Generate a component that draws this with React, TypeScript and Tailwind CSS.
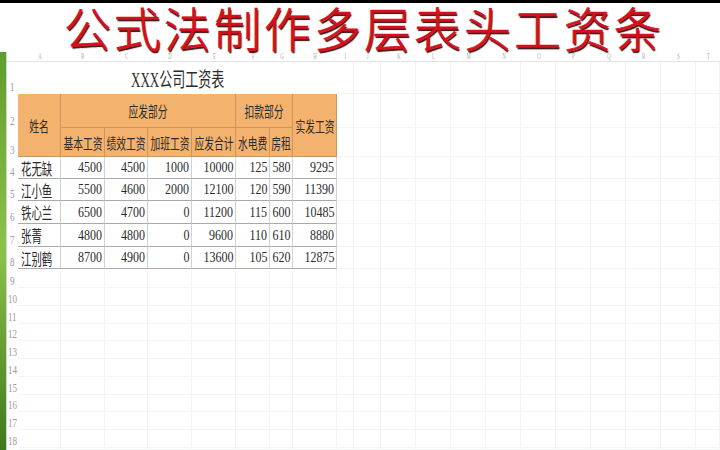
import React from 'react';

const letters = 'ABCDEFGHIJKLMNOPQRST'.split('');

const data: [string, number, number, number, number, number, number, number][] = [
  ['花无缺', 4500, 4500, 1000, 10000, 125, 580, 9295],
  ['江小鱼', 5500, 4600, 2000, 12100, 120, 590, 11390],
  ['铁心兰', 6500, 4700, 0, 11200, 115, 600, 10485],
  ['张菁', 4800, 4800, 0, 9600, 110, 610, 8880],
  ['江别鹤', 8700, 4900, 0, 13600, 105, 620, 12875],
];

function Cjk({ children, className = '' }: { children: React.ReactNode; className?: string }) {
  return <span className={`inline-block whitespace-nowrap scale-x-[0.65] ${className}`}>{children}</span>;
}

function Empty() {
  return <div className="border-r border-b border-[#f3f5f5]" />;
}

function RowNum({ n }: { n?: number }) {
  return (
    <div className="flex items-end justify-center pb-[1px] text-[13px] leading-none text-[#9c9c9c] font-['Liberation_Serif',serif]">
      {n !== undefined && <span className="inline-block scale-x-[0.7]">{n}</span>}
    </div>
  );
}

function HeadCell({ children, className = '' }: { children: React.ReactNode; className?: string }) {
  return (
    <div
      className={`bg-[#f3b26e] border-r border-b border-[#cf9360] flex items-center justify-center text-[15px] leading-none text-[#2b2b2b] font-['Noto_Sans_CJK_SC',sans-serif] ${className}`}
    >
      <Cjk>{children}</Cjk>
    </div>
  );
}

function Empties({ count }: { count: number }) {
  return (
    <>
      {Array.from({ length: count }).map((_, i) => (
        <Empty key={i} />
      ))}
    </>
  );
}

export default function App() {
  return (
    <div className="w-[720px] h-[450px] overflow-hidden bg-white flex flex-col">
      <div className="h-[52px] border-t-[3px] border-black flex items-start justify-center pt-[1px] pl-[8px]">
        <span className="text-[47px] leading-[46px] tracking-[3px] font-light text-[#d5101d] font-['Noto_Sans_CJK_SC',sans-serif] [-webkit-text-stroke:0.7px_#d5101d] [text-shadow:1px_2px_1px_#3a0b0b]">
          公式法制作多层表头工资条
        </span>
      </div>
      <div className="flex flex-1 min-h-0">
        <div className="w-[7px] bg-linear-to-b from-[#5f9e2c] via-[#8bc34a] to-[#3d7a1a] border-r border-[#cfd4cf]" />
        <div className="flex-1 grid grid-cols-[11px_43px_44px_43px_44px_44px_34px_23px_44px_17px_27px_35px_35px_35px_35px_35px_35px_35px_35px_35px_1fr] grid-rows-[10px_32px_34px_29px_22px_22px_23px_23px_22px_19px_17.75px_17.75px_17.75px_17.75px_17.75px_17.75px_17.75px_17.75px_17.75px_1fr]">
          {/* column header row */}
          <div className="border-b border-[#e2e4e4]" />
          {letters.map((l) => (
            <div
              key={l}
              className="border-b border-[#e2e4e4] flex items-center justify-center text-[8px] leading-none text-[#a8a8a8] font-['Liberation_Serif',serif]"
            >
              <span className="inline-block scale-x-[0.6]">{l}</span>
            </div>
          ))}

          {/* row 1 */}
          <RowNum n={1} />
          <div className="col-span-8 flex items-center justify-center pt-[4px] text-[20px] leading-none text-[#2b2b2b] font-['Liberation_Serif','Noto_Sans_CJK_SC',serif]">
            <Cjk>XXX公司工资表</Cjk>
          </div>
          <Empties count={12} />

          {/* row 2 */}
          <RowNum n={2} />
          <HeadCell className="row-span-2">姓名</HeadCell>
          <HeadCell className="col-span-4">应发部分</HeadCell>
          <HeadCell className="col-span-2">扣款部分</HeadCell>
          <HeadCell className="row-span-2">实发工资</HeadCell>
          <Empties count={12} />

          {/* row 3 */}
          <RowNum n={3} />
          <HeadCell>基本工资</HeadCell>
          <HeadCell>绩效工资</HeadCell>
          <HeadCell>加班工资</HeadCell>
          <HeadCell>应发合计</HeadCell>
          <HeadCell>水电费</HeadCell>
          <HeadCell>房租</HeadCell>
          <Empties count={12} />

          {/* data rows */}
          {data.map((row, ri) => (
            <React.Fragment key={ri}>
              <RowNum n={ri + 4} />
              <div className="border-r border-b border-b-[#a9a9a9] border-r-[#d2d2d2] flex items-center pl-[3px] text-[16px] leading-none text-[#2b2b2b] font-['Noto_Sans_CJK_SC',sans-serif]">
                <Cjk className="origin-left">{row[0]}</Cjk>
              </div>
              {row.slice(1).map((v, ci) => (
                <div
                  key={ci}
                  className="border-r border-b border-b-[#a9a9a9] border-r-[#d2d2d2] flex items-center justify-end pr-[2px] text-[15px] leading-none text-[#2b2b2b] font-['Liberation_Serif',serif]"
                >
                  <span className="inline-block whitespace-nowrap scale-x-[0.8] origin-right">{v}</span>
                </div>
              ))}
              <Empties count={12} />
            </React.Fragment>
          ))}

          {/* empty rows 9..18 and partial last row */}
          {Array.from({ length: 11 }).map((_, i) => (
            <React.Fragment key={'e' + i}>
              <RowNum n={i < 10 ? i + 9 : undefined} />
              <Empties count={20} />
            </React.Fragment>
          ))}
        </div>
      </div>
    </div>
  );
}
